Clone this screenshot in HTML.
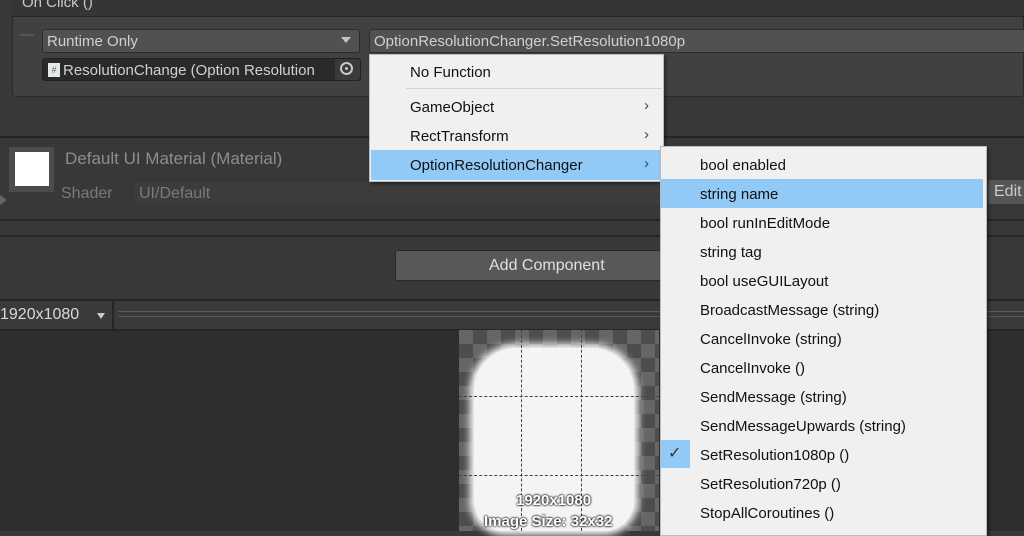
<html><head><style>
body{margin:0;width:1024px;height:531px;overflow:hidden;background:#383838;font-family:"Liberation Sans",sans-serif;position:relative}
div{position:absolute;box-sizing:border-box}
.t{white-space:nowrap}
.mi{position:absolute;font-size:15px;color:#111;white-space:nowrap}
</style></head><body>
<div style="left:12px;top:0;width:1012px;height:17px;background:#353535;border-bottom:1px solid #242424"></div>
<div class="t" style="left:22px;top:-6px;color:#c8c8c8;font-size:15px">On Click ()</div>
<div style="left:12px;top:17px;width:1012px;height:80px;background:#414141;border:1px solid #2a2a2a;border-top:none;border-radius:0 0 4px 4px"></div>
<div style="left:20px;top:34px;width:14px;height:2px;background:#555"></div>
<div style="left:42px;top:29px;width:318px;height:24px;background:#515151;border:1px solid #2c2c2c;border-radius:3px"></div>
<div class="t" style="left:47px;top:33px;color:#d0d0d0;font-size:15px">Runtime Only</div>
<div style="left:341px;top:37px;width:0;height:0;border-left:5px solid transparent;border-right:5px solid transparent;border-top:6px solid #c4c4c4"></div>
<div style="left:42px;top:58px;width:319px;height:23px;background:#2a2a2a;border:1px solid #222;border-radius:3px"></div>
<div style="left:48px;top:63px;width:12px;height:14px;background:#e8e8e8;color:#3a7a3a;font-size:9px;text-align:center;line-height:14px">#</div>
<div class="t" style="left:63px;top:62px;color:#d0d0d0;font-size:15px;width:272px;overflow:hidden">ResolutionChange (Option Resolution</div>
<div style="left:335px;top:59px;width:25px;height:21px;background:#3a3a3a;border-radius:0 3px 3px 0"></div>
<div style="left:340px;top:62px;width:13px;height:13px;border:2px solid #c8c8c8;border-radius:50%"></div>
<div style="left:345px;top:67px;width:3px;height:3px;background:#c8c8c8;border-radius:50%"></div>
<div style="left:369px;top:29px;width:660px;height:24px;background:#515151;border:1px solid #2c2c2c;border-radius:3px"></div>
<div class="t" style="left:374px;top:33px;color:#d0d0d0;font-size:15px">OptionResolutionChanger.SetResolution1080p</div>
<div style="left:0;top:136px;width:1024px;height:2px;background:#242424"></div>
<div style="left:9px;top:147px;width:45px;height:45px;background:#4c4c4c"></div>
<div style="left:15px;top:152px;width:34px;height:34px;background:#fff"></div>
<div style="left:0;top:195px;width:0;height:0;border-top:5px solid transparent;border-bottom:5px solid transparent;border-left:7px solid #666"></div>
<div class="t" style="left:65px;top:149px;color:#8d8d8d;font-size:17px">Default UI Material (Material)</div>
<div class="t" style="left:61px;top:185px;color:#7a7a7a;font-size:16px">Shader</div>
<div style="left:134px;top:182px;width:530px;height:22px;background:#3c3c3c;border-radius:2px"></div>
<div class="t" style="left:139px;top:185px;color:#7a7a7a;font-size:16px">UI/Default</div>
<div style="left:988px;top:180px;width:40px;height:24px;background:#565656;border-radius:3px"></div>
<div class="t" style="left:994px;top:183px;color:#ccc;font-size:16px">Edit</div>
<div style="left:0;top:219px;width:1024px;height:2px;background:#262626"></div>
<div style="left:0;top:235px;width:1024px;height:2px;background:#262626"></div>
<div style="left:395px;top:250px;width:300px;height:31px;background:#585858;border:1px solid #2a2a2a;border-radius:3px"></div>
<div class="t" style="left:489px;top:257px;color:#e0e0e0;font-size:16px">Add Component</div>
<div style="left:0;top:299px;width:1024px;height:32px;background:#3a3a3a;border-top:2px solid #262626;border-bottom:2px solid #262626"></div>
<div style="left:112px;top:301px;width:2px;height:28px;background:#262626"></div>
<div style="left:118px;top:311px;width:906px;height:1px;background:#5a5a5a"></div>
<div style="left:118px;top:316px;width:906px;height:1px;background:#555"></div>
<div class="t" style="left:0;top:306px;color:#d8d8d8;font-size:16px">1920x1080</div>
<div style="left:97px;top:313px;width:0;height:0;border-left:4px solid transparent;border-right:4px solid transparent;border-top:6px solid #ccc"></div>
<div style="left:0;top:331px;width:1024px;height:200px;background:#2e2e2e"></div>
<div style="left:459px;top:330px;width:200px;height:201px;background:#666;background-image:linear-gradient(45deg,#4d4d4d 25%,transparent 25%,transparent 75%,#4d4d4d 75%),linear-gradient(45deg,#4d4d4d 25%,transparent 25%,transparent 75%,#4d4d4d 75%);background-size:28px 28px;background-position:0 0,14px 14px"></div>
<div style="left:474px;top:348px;width:160px;height:183px;background:#f4f4f4;border-radius:42px 42px 30px 30px;box-shadow:0 0 8px 4px #fff"></div>
<div style="left:459px;top:396px;width:200px;border-top:1px dashed #444"></div>
<div style="left:459px;top:475px;width:200px;border-top:1px dashed #444"></div>
<div style="left:521px;top:330px;height:201px;border-left:1px dashed #444"></div>
<div style="left:581px;top:330px;height:201px;border-left:1px dashed #444"></div>
<div class="t" style="left:516px;top:492px;color:#fff;font-size:15px;font-weight:bold;text-shadow:0 0 2px #000,0 0 2px #000">1920x1080</div>
<div class="t" style="left:484px;top:513px;color:#fff;font-size:15px;font-weight:bold;text-shadow:0 0 2px #000,0 0 2px #000">Image Size: 32x32</div>
<div style="left:369px;top:54px;width:295px;height:128px;background:#f0f0f0;border:1px solid #bbb;box-shadow:2px 2px 3px rgba(0,0,0,.4)"></div>
<div class="mi" style="left:410px;top:64px">No Function</div>
<div style="left:406px;top:88px;width:256px;height:1px;background:#d4d4d4"></div>
<div class="mi" style="left:410px;top:99px">GameObject</div>
<div class="mi" style="left:644px;top:97px;color:#444">›</div>
<div class="mi" style="left:410px;top:128px">RectTransform</div>
<div class="mi" style="left:644px;top:126px;color:#444">›</div>
<div style="left:371px;top:150px;width:291px;height:30px;background:#91c9f7"></div>
<div class="mi" style="left:410px;top:157px">OptionResolutionChanger</div>
<div class="mi" style="left:644px;top:155px;color:#444">›</div>
<div style="left:660px;top:146px;width:327px;height:390px;background:#f0f0f0;border:1px solid #bbb;box-shadow:2px 2px 3px rgba(0,0,0,.4)"></div>
<div style="left:661px;top:179px;width:322px;height:29px;background:#91c9f7"></div>
<div style="left:661px;top:440px;width:29px;height:28px;background:#91c9f7"></div>
<div class="mi" style="left:668px;top:443px;color:#333;font-size:16px">✓</div>
<div class="mi" style="left:700px;top:157px">bool enabled</div>
<div class="mi" style="left:700px;top:186px">string name</div>
<div class="mi" style="left:700px;top:215px">bool runInEditMode</div>
<div class="mi" style="left:700px;top:244px">string tag</div>
<div class="mi" style="left:700px;top:273px">bool useGUILayout</div>
<div class="mi" style="left:700px;top:302px">BroadcastMessage (string)</div>
<div class="mi" style="left:700px;top:331px">CancelInvoke (string)</div>
<div class="mi" style="left:700px;top:360px">CancelInvoke ()</div>
<div class="mi" style="left:700px;top:389px">SendMessage (string)</div>
<div class="mi" style="left:700px;top:418px">SendMessageUpwards (string)</div>
<div class="mi" style="left:700px;top:447px">SetResolution1080p ()</div>
<div class="mi" style="left:700px;top:476px">SetResolution720p ()</div>
<div class="mi" style="left:700px;top:505px">StopAllCoroutines ()</div>
</body></html>
